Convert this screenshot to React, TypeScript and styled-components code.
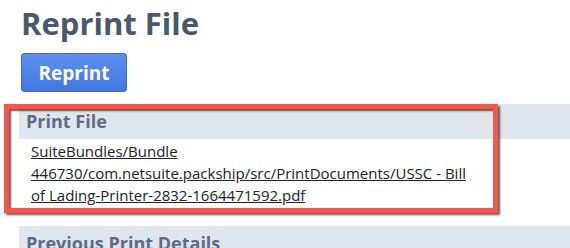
import React from "react";
import styled, { createGlobalStyle } from "styled-components";

const GlobalStyle = createGlobalStyle`
  body {
    margin: 0;
    background: #ffffff;
    font-family: "Open Sans", "Noto Sans", Arial, sans-serif;
  }
`;

// Styled Components
const Page = styled.div`
  width: 570px;
  height: 248px;
  overflow: hidden;
  background: #ffffff;
`;

const Header = styled.div`
  padding: 3px 0 0 21px;
`;

const Title = styled.h1`
  margin: 0;
  font-size: 31px;
  line-height: 40px;
  font-weight: 700;
  color: #4b586c;
`;

const PrimaryButton = styled.button`
  display: block;
  margin-top: 10px;
  width: 106px;
  height: 39px;
  padding: 0;
  border: 1px solid #3d6ccf;
  border-radius: 3px;
  background: linear-gradient(#5e90f0, #4177e2);
  color: #ffffff;
  font-family: inherit;
  font-size: 19px;
  font-weight: 700;
  cursor: pointer;
`;

const Section = styled.section<{ $gap: number }>`
  position: relative;
  margin: ${(p) => p.$gap}px 0 0 19px;
`;

const SectionHeader = styled.div`
  height: 35px;
  line-height: 34px;
  padding-left: 7px;
  background: #e1e5ee;
  color: #5d6c86;
  font-size: 18px;
  font-weight: 700;
`;

const SectionBody = styled.div`
  padding: 1px 0 0 12px;
  width: 448px;
`;

const FileLink = styled.a`
  font-size: 15px;
  line-height: 20px;
  color: #222222;
  text-decoration: underline;
`;

const Highlight = styled.div`
  position: absolute;
  top: 0;
  left: -15px;
  width: 494px;
  height: 109px;
  box-sizing: border-box;
  border: 5px solid #f2584b;
  box-shadow: 2px 2px 2px rgba(40, 40, 40, 0.75),
    inset 2px 2px 2px rgba(40, 40, 40, 0.75);
  pointer-events: none;
`;

const filePath =
  "SuiteBundles/Bundle 446730/com.netsuite.packship/src/PrintDocuments/USSC - Bill of Lading-Printer-2832-1664471592.pdf";

const App = () => {
  return (
    <Page>
      <GlobalStyle />
      <Header>
        <Title>Reprint File</Title>
        <PrimaryButton>Reprint</PrimaryButton>
      </Header>
      <Section $gap={12}>
        <SectionHeader>Print File</SectionHeader>
        <SectionBody>
          <FileLink href="#">{filePath}</FileLink>
        </SectionBody>
        <Highlight />
      </Section>
      <Section $gap={20}>
        <SectionHeader>Previous Print Details</SectionHeader>
      </Section>
    </Page>
  );
};

export default App;
